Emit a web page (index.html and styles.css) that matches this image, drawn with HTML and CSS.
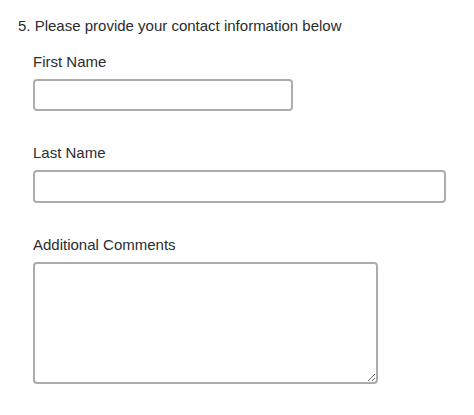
FILE: index.html
```html
<!DOCTYPE html>
<html>
<head>
<meta charset="utf-8">
<link rel="stylesheet" href="styles.css">
</head>
<body>
<form class="question">
  <div class="question-title">5. Please provide your contact information below</div>
  <div class="fields">
    <div class="field">
      <label class="field-label" for="first">First Name</label>
      <input class="text-input input-first" id="first" type="text">
    </div>
    <div class="field">
      <label class="field-label" for="last">Last Name</label>
      <input class="text-input input-last" id="last" type="text">
    </div>
    <div class="field">
      <label class="field-label" for="comments">Additional Comments</label>
      <textarea class="text-input input-comments" id="comments"></textarea>
    </div>
  </div>
</form>
</body>
</html>
```
FILE: styles.css
```css
html, body {
  margin: 0;
  padding: 0;
  background: #ffffff;
}
body {
  font-family: "Liberation Sans", Arial, sans-serif;
  font-size: 15px;
  color: #2a2c2e;
}
.question {
  display: flex;
  flex-direction: column;
  padding: 16px 0 0 18px;
}
.question-title {
  line-height: 20px;
}
.fields {
  display: flex;
  flex-direction: column;
  gap: 32px;
  padding: 16px 0 0 15px;
}
.field {
  display: flex;
  flex-direction: column;
  align-items: flex-start;
  gap: 7px;
}
.field-label {
  line-height: 20px;
}
.text-input {
  box-sizing: border-box;
  margin: 0;
  border: 2px solid #aaadb0;
  border-radius: 4px;
  background: #fff;
  font: inherit;
  outline: none;
}
.input-first {
  width: 260px;
  height: 32px;
}
.input-last {
  width: 413px;
  height: 33px;
}
.input-comments {
  width: 345px;
  height: 122px;
  resize: both;
}
```
